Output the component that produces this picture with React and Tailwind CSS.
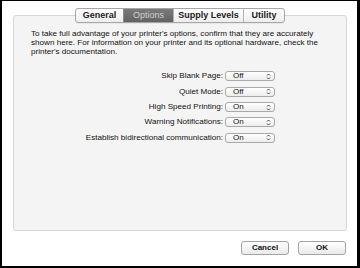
const tabs = ["General", "Options", "Supply Levels", "Utility"];

const rows = [
  { label: "Skip Blank Page:", value: "Off" },
  { label: "Quiet Mode:", value: "Off" },
  { label: "High Speed Printing:", value: "On" },
  { label: "Warning Notifications:", value: "On" },
  { label: "Establish bidirectional communication:", value: "On" },
];

function Stepper() {
  return (
    <svg width="5" height="7" viewBox="0 0 5 7" className="text-[#333]">
      <path d="M1 2.5 L2.5 1 L4 2.5" fill="none" stroke="currentColor" strokeWidth="0.9" />
      <path d="M1 4.5 L2.5 6 L4 4.5" fill="none" stroke="currentColor" strokeWidth="0.9" />
    </svg>
  );
}

export default function App() {
  return (
    <div
      className="w-[360px] h-[268px] bg-white border-t border-l-2 border-r-[3px] border-b-2 border-black flex flex-col text-[#111]"
      style={{ fontFamily: '"Liberation Sans", Arial, sans-serif' }}
    >
      {/* Tab panel */}
      <div className="ml-[11px] mt-[14px] w-[334px] h-[216px] bg-[#f4f4f4] border border-[#d6d6d6] rounded-[3px] flex flex-col">
        <div className="flex justify-center -mt-[8px]">
          <div className="flex h-[15px] border border-[#a6a6a6] rounded-[3px] overflow-hidden bg-gradient-to-b from-white to-[#ededed] shadow-[0_1px_0_rgba(0,0,0,0.05)]">
            {tabs.map((t, i) => (
              <div
                key={t}
                className={
                  t === "Options"
                    ? "flex items-center justify-center px-[9px] text-[9px] leading-none bg-gradient-to-b from-[#7a7a7a] to-[#636363] text-[#cfcfcf] border-l border-[#8a8a8a]"
                    : `flex items-center justify-center text-[9px] leading-none font-bold text-[#222] ${
                        i > 0 ? "border-l border-[#b4b4b4]" : ""
                      } ${t === "General" ? "w-[47px]" : t === "Supply Levels" ? "w-[70px]" : "w-[41px]"}`
                }
              >
                {t}
              </div>
            ))}
          </div>
        </div>

        <p className="mt-[6px] ml-[17px] w-[298px] text-[8.1px] leading-[9.2px]">
          To take full advantage of your printer's options, confirm that they are accurately
          shown here. For information on your printer and its optional hardware, check the
          printer's documentation.
        </p>

        <div className="mt-[15px] flex flex-col gap-[6px]">
          {rows.map((r) => (
            <div key={r.label} className="flex items-center h-[9.4px]">
              <div className="w-[210px] text-right text-[8.1px] pr-[1px] leading-none">
                {r.label}
              </div>
              <div className="ml-[1px] w-[50px] h-[10px] border border-[#a9a9a9] rounded-[3px] bg-gradient-to-b from-white to-[#ececec] flex items-center justify-between pl-[7px] pr-[3px]">
                <span className="text-[8px] leading-none">{r.value}</span>
                <Stepper />
              </div>
            </div>
          ))}
        </div>
      </div>

      {/* Buttons */}
      <div className="flex justify-end gap-[9px] mt-[10px] mr-[11px]">
        <button className="w-[48px] h-[14px] border border-[#a3a3a3] rounded-[3px] bg-gradient-to-b from-white to-[#eaeaea] text-[8px] font-bold leading-none">
          Cancel
        </button>
        <button className="w-[48px] h-[14px] border border-[#a3a3a3] rounded-[3px] bg-gradient-to-b from-white to-[#eaeaea] text-[8px] font-bold leading-none">
          OK
        </button>
      </div>
    </div>
  );
}
